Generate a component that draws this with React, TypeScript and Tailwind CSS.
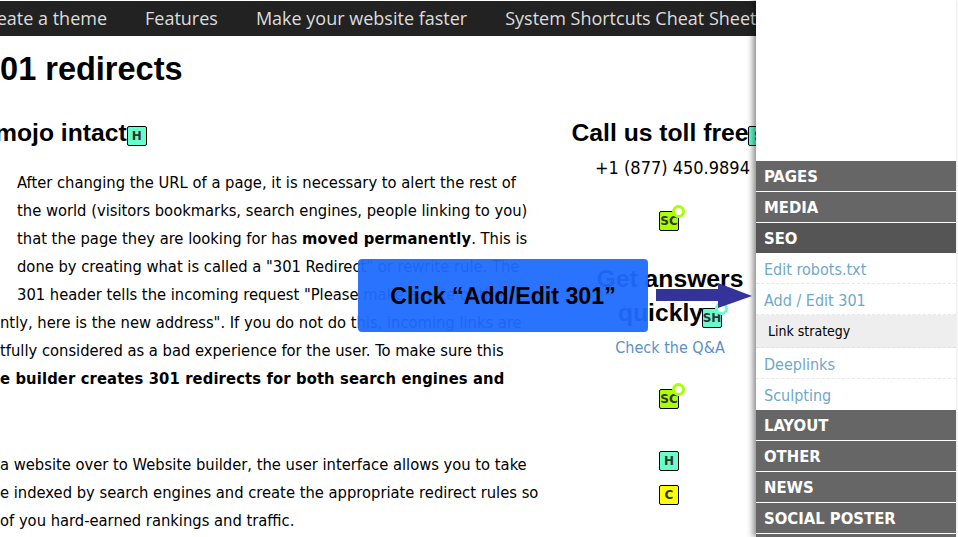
const navItems = ['Create a theme', 'Features', 'Make your website faster', 'System Shortcuts Cheat Sheet']

const introLines = [
  'After changing the URL of a page, it is necessary to alert the rest of',
  'the world (visitors bookmarks, search engines, people linking to you)',
]

const laterLines = [
  'a website over to Website builder, the user interface allows you to take',
  'e indexed by search engines and create the appropriate redirect rules so',
  'of you hard-earned rankings and traffic.',
]

function Badge({ label, color, ring }: { label: string; color: string; ring?: string }) {
  return (
    <span className={`relative inline-flex h-[20px] w-[20px] items-center justify-center rounded-[2px] border border-black font-['DejaVu_Sans'] text-[12px] leading-none font-bold text-[#333] [font-stretch:normal] ${color}`}>
      {label}
      {ring && <span className={`absolute -top-[7px] -right-[7px] h-[13px] w-[13px] rounded-full border-[3px] bg-white ${ring}`} />}
    </span>
  )
}

function SideHead({ label, dark }: { label: string; dark?: boolean }) {
  return (
    <div className={`mb-px flex h-[30px] items-center pt-[2px] pl-2 text-[16.5px] font-bold text-white ${dark ? 'bg-[#555]' : 'bg-[#666]'}`}>
      {label}
    </div>
  )
}

function SideLink({ label, last }: { label: string; last?: boolean }) {
  return (
    <div className={`flex h-[31px] items-center pt-[3px] pl-2 text-[16px] text-[#6fa8c9] ${last ? '' : 'border-b border-dashed border-[#e8e8e8]'}`}>
      {label}
    </div>
  )
}

export default function App() {
  return (
    <div className="relative flex h-[537px] w-[958px] overflow-hidden bg-white font-['DejaVu_Sans_Condensed','DejaVu_Sans',sans-serif] text-[16.4px] text-black [font-stretch:condensed]">
      <main className="w-[756px] shrink-0 overflow-hidden">
        {/* Top nav, scrolled off to the left */}
        <nav className="mt-px flex h-[35px] items-center gap-[38px] bg-[#222] whitespace-nowrap font-['Open_Sans'] text-[18px] text-[#ddd] [font-stretch:normal]">
          <span className="-ml-[22px]">{navItems[0]}</span>
          {navItems.slice(1).map(item => (
            <span key={item}>{item}</span>
          ))}
        </nav>

        <h1 className="mt-[14px] -ml-[18px] font-['Liberation_Sans'] text-[32.5px] leading-[38px] font-bold whitespace-nowrap">301 redirects</h1>

        <div className="flex">
          <div className="w-[558px] shrink-0 leading-[28px] whitespace-nowrap">
            <h2 className="mt-[31px] -ml-[5px] flex items-center font-['Liberation_Sans'] text-[24.7px] leading-[28px] font-bold">
              mojo intact
              <span className="-mt-[2px]"><Badge label="H" color="bg-[#66ffcc]" /></span>
            </h2>

            <div className="mt-[22px] pl-[17px]">
              {introLines.map(line => (
                <div key={line}>{line}</div>
              ))}
              <div>that the page they are looking for has <b className="tracking-[0.15px]">moved permanently</b>. This is</div>
              <div>done by creating what is called a "301 Redirect" or rewrite rule. The</div>
              <div>301 header tells the incoming request "Please make a note of the</div>
            </div>
            <div>ntly, here is the new address". If you do not do this, incoming links are</div>
            <div>tfully considered as a bad experience for the user. To make sure this</div>
            <div className="font-bold tracking-[0.14px]">e builder creates 301 redirects for both search engines and</div>

            <div className="mt-[58px]">
              {laterLines.map(line => (
                <div key={line}>{line}</div>
              ))}
            </div>
          </div>

          {/* Right column */}
          <aside className="flex w-[224px] shrink-0 flex-col items-center">
            <h2 className="mt-[31px] flex items-center font-['Liberation_Sans'] text-[24.7px] leading-[28px] font-bold whitespace-nowrap">
              Call us toll free
              <span className="-mt-[2px]"><Badge label="S" color="bg-[#66ffcc]" /></span>
            </h2>
            <div className="mt-[9px] ml-[5px] text-[18px] leading-[24px]">+1 (877) 450.9894</div>
            <div className="mt-[28px] -ml-[2px] h-[20px]"><Badge label="SC" color="bg-[#aaff00]" ring="border-[#aaff00]" /></div>
            <h2 className="mt-[34px] text-center font-['Liberation_Sans'] text-[24.7px] leading-[34px] font-bold">
              Get answers
              <br />
              quickly<span className="-ml-[1px] inline-block align-[-1px]"><Badge label="SH" color="bg-[#66ffcc]" ring="border-[#66ffcc]" /></span>
            </h2>
            <div className="mt-[5px] text-[16px] leading-[24px] text-[#5b8fc9]">Check the Q&amp;A</div>
            <div className="mt-[26px] -ml-[2px] h-[20px]"><Badge label="SC" color="bg-[#aaff00]" ring="border-[#aaff00]" /></div>
            <div className="mt-[42px] -ml-[2px] h-[20px]"><Badge label="H" color="bg-[#66ffcc]" /></div>
            <div className="mt-[14px] -ml-[2px] h-[20px]"><Badge label="C" color="bg-[#ffff00]" /></div>
          </aside>
        </div>
      </main>

      {/* Side panel */}
      <div className="z-10 h-full w-[200px] shrink-0 bg-white pt-[161px] text-[16px] shadow-[-3px_0_6px_rgba(0,0,0,0.45)]">
        <SideHead label="PAGES" />
        <SideHead label="MEDIA" />
        <div className="-mb-px"><SideHead label="SEO" dark /></div>
        <SideLink label="Edit robots.txt" />
        <SideLink label="Add / Edit 301" />
        <div className="flex h-[33px] items-center border-b border-dashed border-[#e0e0e0] bg-[#eee] pt-px pl-3 text-[14px]">Link strategy</div>
        <SideLink label="Deeplinks" />
        <SideLink label="Sculpting" last />
        <SideHead label="LAYOUT" />
        <SideHead label="OTHER" />
        <SideHead label="NEWS" />
        <SideHead label="SOCIAL POSTER" />
        <div className="h-[4px] bg-[#666]" />
      </div>

      {/* Tutorial callout over the page */}
      <div className="absolute top-[259px] left-[358px] flex h-[73px] w-[290px] items-center justify-center rounded-[4px] bg-[#1f6bff]/95 pt-[2px] font-['Liberation_Sans'] text-[23.2px] font-bold">
        Click “Add/Edit 301”
      </div>
      <svg className="absolute top-[283px] left-[656px]" width="97" height="25" viewBox="0 0 97 25">
        <path d="M0 6H62V0L96 13L62 25V18H0Z" fill="#333399" />
      </svg>
    </div>
  )
}
